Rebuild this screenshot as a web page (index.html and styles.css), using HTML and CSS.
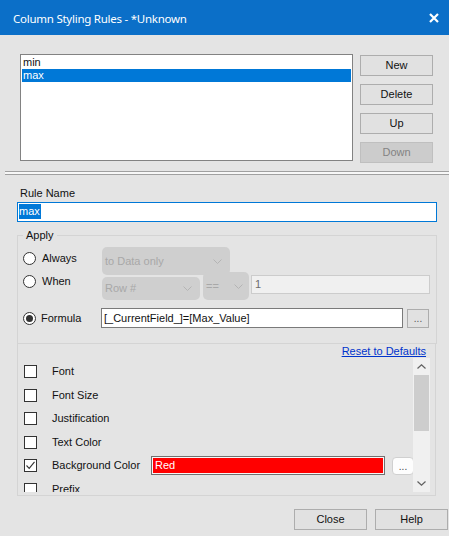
FILE: index.html
```html
<!DOCTYPE html>
<html>
<head>
<meta charset="utf-8">
<title>Column Styling Rules</title>
<link rel="stylesheet" href="styles.css">
</head>
<body>
<div class="dialog">
  <div class="titlebar">
    <span class="title">Column Styling Rules - *Unknown</span>
    <svg class="close-x" width="10" height="10" viewBox="0 0 10 10"><path d="M1 1L9 9M9 1L1 9" stroke="#fff" stroke-width="2.2" fill="none"/></svg>
  </div>

  <div class="top">
    <div class="listbox">
      <div class="item">min</div>
      <div class="item selected">max</div>
    </div>
    <div class="side-buttons">
      <div class="btn">New</div>
      <div class="btn">Delete</div>
      <div class="btn">Up</div>
      <div class="btn disabled">Down</div>
    </div>
  </div>

  <div class="separator"></div>

  <div class="form">
    <div class="label rule-label">Rule Name</div>
    <div class="rule-input"><span class="sel">max</span></div>

    <fieldset class="apply">
      <legend>Apply</legend>
      <div class="apply-row row1">
        <div class="radio-col"><span class="radio"></span><span>Always</span></div>
        <div class="combo combo-data"><span>to Data only</span><svg width="9" height="5" viewBox="0 0 9 5"><path d="M0.5 0.5L4.5 4.5L8.5 0.5" stroke="#b4b4b4" fill="none"/></svg></div>
      </div>
      <div class="apply-row row2">
        <div class="radio-col"><span class="radio"></span><span>When</span></div>
        <div class="combo combo-row"><span>Row #</span><svg width="9" height="5" viewBox="0 0 9 5"><path d="M0.5 0.5L4.5 4.5L8.5 0.5" stroke="#b4b4b4" fill="none"/></svg></div>
        <div class="combo combo-eq"><span>==</span><svg width="9" height="5" viewBox="0 0 9 5"><path d="M0.5 0.5L4.5 4.5L8.5 0.5" stroke="#b4b4b4" fill="none"/></svg></div>
        <div class="value-disabled">1</div>
      </div>
      <div class="apply-row row3">
        <div class="radio-col formula-col"><span class="radio checked"></span><span>Formula</span></div>
        <div class="formula-input">[_CurrentField_]=[Max_Value]</div>
        <div class="dots-btn">...</div>
      </div>
    </fieldset>

    <div class="props">
      <div class="reset-row"><span class="reset-link">Reset to Defaults</span></div>
      <div class="props-body">
        <div class="props-list">
          <div class="prop"><span class="check"></span><span class="prop-name">Font</span></div>
          <div class="prop"><span class="check"></span><span class="prop-name">Font Size</span></div>
          <div class="prop"><span class="check"></span><span class="prop-name">Justification</span></div>
          <div class="prop"><span class="check"></span><span class="prop-name">Text Color</span></div>
          <div class="prop">
            <span class="check checked"><svg width="11" height="11" viewBox="0 0 11 11"><path d="M1.5 5.5L4.2 8.3L9.5 1.8" stroke="#333" stroke-width="1.1" fill="none"/></svg></span>
            <span class="prop-name">Background Color</span>
            <div class="color-field">Red</div>
            <div class="color-btn">...</div>
          </div>
          <div class="prop"><span class="check"></span><span class="prop-name">Prefix</span></div>
        </div>
        <div class="scrollbar">
          <div class="sb-arrow"><svg width="9" height="5" viewBox="0 0 9 5"><path d="M0.5 4.5L4.5 0.8L8.5 4.5" stroke="#606060" stroke-width="1.2" fill="none"/></svg></div>
          <div class="sb-thumb"></div>
          <div class="sb-track"></div>
          <div class="sb-arrow"><svg width="9" height="5" viewBox="0 0 9 5"><path d="M0.5 0.5L4.5 4.2L8.5 0.5" stroke="#606060" stroke-width="1.2" fill="none"/></svg></div>
        </div>
      </div>
    </div>
  </div>

  <div class="footer">
    <div class="btn">Close</div>
    <div class="btn">Help</div>
  </div>
</div>
</body>
</html>
```

FILE: styles.css
```css
* { box-sizing: border-box; }
html, body { margin: 0; padding: 0; }
body {
  width: 449px;
  height: 536px;
  overflow: hidden;
  background: #e4e4e4;
  font-family: "Liberation Sans", Arial, sans-serif;
  font-size: 11px;
  line-height: 13px;
  color: #111;
}
.dialog { width: 449px; height: 536px; }

.titlebar {
  height: 35px;
  background: #0b6fc8;
  display: flex;
  align-items: center;
  justify-content: space-between;
  padding: 0 10px 0 13px;
}
.title {
  color: #fff;
  font-family: "Noto Sans", "Open Sans", sans-serif;
  font-size: 11.5px;
  letter-spacing: -0.25px;
  line-height: 16px;
  margin-top: 2px;
}

.top {
  display: flex;
  padding: 19px 0 0 20px;
}
.listbox {
  width: 333px;
  height: 107px;
  background: #fff;
  border: 1px solid #828282;
  padding: 1px;
}
.item { height: 13px; padding-left: 1px; }
.item.selected { background: #0078d7; color: #fff; }

.side-buttons {
  margin-left: 7px;
  margin-top: 1px;
  display: flex;
  flex-direction: column;
  gap: 8px;
}
.btn {
  width: 73px;
  height: 21px;
  background: #e1e1e1;
  border: 1px solid #adadad;
  display: flex;
  align-items: center;
  justify-content: center;
}
.btn.disabled {
  background: #cccccc;
  border-color: #bfbfbf;
  color: #838383;
}

.separator {
  margin: 8px 0 0 5px;
  height: 4px;
  border-top: 1px solid #a0a0a0;
  border-bottom: 1px solid #a0a0a0;
  background: #f7f7f7;
}

.form { padding: 0 12px 0 17px; }
.rule-label { margin: 12px 0 0 3px; }
.rule-input {
  margin-top: 2px;
  width: 420px;
  height: 20px;
  background: #fff;
  border: 1px solid #0078d7;
  padding: 1px 0 0 1px;
}
.sel {
  display: inline-block;
  background: #0078d7;
  color: #fff;
  height: 15px;
  line-height: 15px;
  padding-right: 1px;
}

.apply {
  margin: 7px 0 0 0;
  padding: 5px 5px 15px 5px;
  width: 420px;
  border: 1px solid #d4d4d4;
  min-inline-size: 0;
}
.apply legend {
  padding: 0 3px;
  line-height: 13px;
}
.apply-row { display: flex; align-items: flex-start; }
.row1 { height: 28px; }
.row2 { height: 28px; margin-top: -3px; }
.row3 { height: 20px; margin-top: 8px; align-items: center; }

.radio-col {
  width: 79px;
  height: 13px;
  display: flex;
  align-items: center;
  gap: 6px;
}
.row1 .radio-col { margin-top: 5px; }
.row2 .radio-col { margin-top: 3px; }
.formula-col { width: 78px; gap: 5px; }
.radio {
  width: 13px;
  height: 13px;
  border-radius: 50%;
  border: 1px solid #333;
  background: #fff;
  display: inline-flex;
  align-items: center;
  justify-content: center;
  flex: none;
}
.radio.checked::after {
  content: "";
  width: 7px;
  height: 7px;
  border-radius: 50%;
  background: #333;
}

.combo {
  background: #cfcfcf;
  border-radius: 5px;
  color: #a8a8a8;
  display: flex;
  align-items: center;
  justify-content: space-between;
  padding: 0 8px 0 3px;
}
.combo-data { width: 128px; height: 28px; }
.combo-row { width: 98px; height: 23px; margin-top: 5px; }
.combo-eq { width: 46px; height: 28px; margin-left: 3px; padding-right: 6px; }
.value-disabled {
  margin-left: 2px;
  margin-top: 3px;
  width: 179px;
  height: 19px;
  background: #f0f0f0;
  border: 1px solid #cccccc;
  color: #6d6d6d;
  padding: 2px 0 0 3px;
}
.formula-input {
  width: 302px;
  height: 20px;
  background: #fff;
  border: 1px solid #7a7a7a;
  padding: 3px 0 0 2px;
}
.dots-btn {
  margin-left: 4px;
  width: 22px;
  height: 19px;
  background: #e1e1e1;
  border: 1px solid #adadad;
  color: #555;
  font-size: 10px;
  text-align: center;
  line-height: 18px;
}

.props {
  width: 419px;
  height: 152px;
  border: 1px solid #d4d4d4;
  border-top: none;
  padding: 0 5px 3px 1px;
}
.reset-row {
  height: 14px;
  display: flex;
  justify-content: flex-end;
  padding-right: 4px;
  padding-top: 1px;
}
.reset-link { color: #0033cc; text-decoration: underline; }
.props-body { display: flex; height: 134px; }
.props-list {
  flex: 1;
  overflow: hidden;
  padding-top: 2px;
}
.prop {
  height: 23.5px;
  display: flex;
  align-items: center;
  padding-left: 5px;
}
.check {
  width: 13px;
  height: 13px;
  border: 1px solid #333;
  background: #fff;
  flex: none;
  display: inline-flex;
  align-items: center;
  justify-content: center;
}
.prop-name { margin-left: 15px; width: 99px; flex: none; }
.color-field {
  width: 234px;
  height: 19px;
  background: #ff0000;
  border: 1px solid #707070;
  box-shadow: inset 0 0 0 1px #f6f6f6;
  color: #fff;
  padding: 2px 0 0 3px;
  flex: none;
}
.color-btn {
  margin-left: 7px;
  width: 22px;
  height: 18px;
  background: #fdfdfd;
  border: 1px solid #d0d0d0;
  border-radius: 4px;
  color: #444;
  font-size: 10px;
  text-align: center;
  line-height: 17px;
  flex: none;
}

.scrollbar {
  width: 17px;
  background: #f0f0f0;
  display: flex;
  flex-direction: column;
}
.sb-arrow {
  height: 17px;
  display: flex;
  align-items: center;
  justify-content: center;
  flex: none;
}
.sb-thumb {
  height: 56px;
  margin: 0 1px;
  background: #cdcdcd;
  flex: none;
}
.sb-track { flex: 1; }

.footer {
  margin-top: 13px;
  display: flex;
  justify-content: flex-end;
  gap: 8px;
  padding-right: 1px;
}
```
